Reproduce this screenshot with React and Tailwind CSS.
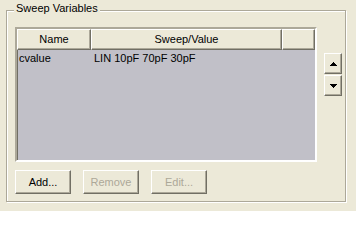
import React from 'react';

const raised =
  'border border-t-white border-l-white border-r-[#716f64] border-b-[#716f64] shadow-[inset_-1px_-1px_0_#aca899]';

const SpinButton = ({ dir }) => (
  <button className={`w-[18px] h-[21px] bg-[#ece9d8] flex items-center justify-center ${raised}`}>
    <svg width="7" height="4" viewBox="0 0 7 4" shapeRendering="crispEdges">
      {dir === 'up' ? (
        <>
          <rect x="3" y="0" width="1" height="1" fill="#000" />
          <rect x="2" y="1" width="3" height="1" fill="#000" />
          <rect x="1" y="2" width="5" height="1" fill="#000" />
          <rect x="0" y="3" width="7" height="1" fill="#000" />
        </>
      ) : (
        <>
          <rect x="0" y="0" width="7" height="1" fill="#000" />
          <rect x="1" y="1" width="5" height="1" fill="#000" />
          <rect x="2" y="2" width="3" height="1" fill="#000" />
          <rect x="3" y="3" width="1" height="1" fill="#000" />
        </>
      )}
    </svg>
  </button>
);

const PushButton = ({ label, disabled }) => (
  <button
    className={`w-[56px] h-[24px] bg-[#ece9d8] text-[11px] leading-none ${raised} ${
      disabled ? 'text-[#aca899]' : 'text-black'
    }`}
  >
    {label}
  </button>
);

const App = () => {
  return (
    <div
      className="w-[356px] h-[211px] bg-[#ece9d8] pt-[10px] pl-[6px] text-[11px] text-black"
      style={{ fontFamily: '"Liberation Sans", Arial, sans-serif' }}
    >
      {/* Group box */}
      <div className="relative w-[340px] h-[192px] border border-[#aca899] shadow-[inset_1px_1px_0_#fff,1px_1px_0_#fff] pl-[8px] pt-[16px]">
        <span className="absolute left-[7px] top-[-9px] px-[2px] bg-[#ece9d8] leading-[13px]">
          Sweep Variables
        </span>

        <div className="flex gap-[7px]">
          {/* List view */}
          <div className="w-[302px] h-[135px] bg-[#c1c0c8] border-2 border-t-[#aca899] border-l-[#aca899] border-r-white border-b-white shadow-[inset_1px_1px_0_#716f64] flex flex-col">
            <div className="flex h-[21px] leading-[19px]">
              <div className={`w-[74px] bg-[#ece9d8] text-center ${raised}`}>Name</div>
              <div className={`w-[191px] bg-[#ece9d8] text-center ${raised}`}>Sweep/Value</div>
              <div className={`w-[33px] bg-[#ece9d8] ${raised}`}></div>
            </div>
            <div className="flex h-[17px] items-center">
              <div className="w-[74px] pl-[2px]">cvalue</div>
              <div className="pl-[3px]">LIN 10pF 70pF 30pF</div>
            </div>
          </div>

          {/* Spin buttons */}
          <div className="mt-[26px] flex flex-col gap-[1px]">
            <SpinButton dir="up" />
            <SpinButton dir="down" />
          </div>
        </div>

        <div className="mt-[8px] flex gap-[12px]">
          <PushButton label="Add..." />
          <PushButton label="Remove" disabled />
          <PushButton label="Edit..." disabled />
        </div>
      </div>
    </div>
  );
};

export default App;
